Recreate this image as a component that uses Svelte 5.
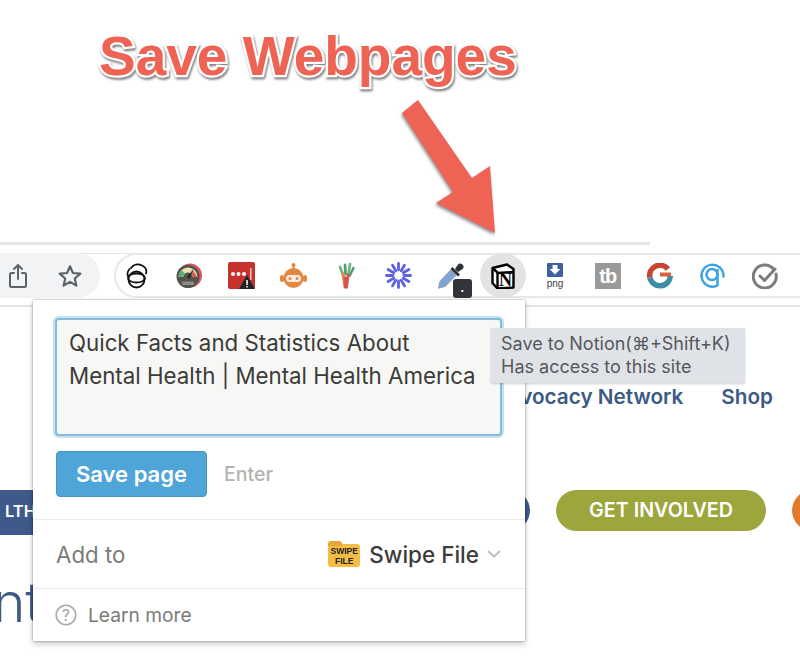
<script>
  const navLinks = ['Advocacy Network', 'Shop'];
</script>

<div class="screen">
  <header class="banner">
    <h1>Save Webpages</h1>
    <div class="rule"></div>
  </header>

  <div class="toolbar">
    <div class="omni-end">
      <svg class="tool" width="24" height="26" viewBox="0 0 24 26" fill="none" stroke="#5f6368" stroke-width="2" stroke-linecap="round" stroke-linejoin="round">
        <path d="M8 10H5.500a1.500 1.500 0 0 0-1.500 1.500v11A1.500 1.500 0 0 0 5.500 24h13a1.500 1.500 0 0 0 1.500-1.500v-11a1.500 1.500 0 0 0-1.500-1.500H16" />
        <path d="M12 16V2M8 6l4-4 4 4" />
      </svg>
      <svg class="tool" width="26" height="26" viewBox="0 0 24 24" fill="none" stroke="#5f6368" stroke-width="2" stroke-linejoin="round">
        <path d="M12 3l2.700 6.200 6.800.6-5.100 4.500 1.500 6.600L12 17.400l-5.900 3.500 1.500-6.600-5.100-4.500 6.800-.6z" />
      </svg>
    </div>

    <div class="extensions">
      <div class="ext">
        <svg width="22" height="26" viewBox="0 0 22 26" fill="none" stroke="#111" stroke-width="1.800">
          <path d="M5 5C7.500 1.500 12 .5 16 2.500c3.500 1.800 5 5 4 8" stroke-linecap="round" />
          <path d="M3.500 6C1.500 8.500 1 11 2 13" stroke-linecap="round" />
          <ellipse cx="10.500" cy="15" rx="8.500" ry="4.500" />
          <circle cx="10.500" cy="16.500" r="8" />
        </svg>
      </div>
      <div class="ext">
        <svg width="26" height="26" viewBox="0 0 26 26">
          <circle cx="14" cy="12.500" r="12" fill="#d9545c" />
          <circle cx="12" cy="13.500" r="11.500" fill="#55534f" />
          <path d="M2.500 14a9.500 9.500 0 0 1 19 0h-5a4.500 4.500 0 0 0-9 0z" fill="#ece2b8" />
          <path d="M2.500 14a9.500 9.500 0 0 1 3-7l3.500 3.500A4.500 4.500 0 0 0 7.500 14z" fill="#5aaf76" />
          <path d="M16 6l5.500 8h-5l-1.500-3.500z" fill="#dc5f58" />
          <path d="M17.500 6.500l-6.500 7.500 2.500 1.500z" fill="#222" />
          <rect x="6" y="18.500" width="12" height="3.500" rx="1" fill="#8a8a86" />
        </svg>
      </div>
      <div class="ext">
        <svg width="27" height="27" viewBox="0 0 27 27">
          <rect width="27" height="27" rx="2" fill="#c8322e" />
          <circle cx="5" cy="12" r="2" fill="#fff" />
          <circle cx="10.500" cy="12" r="2" fill="#fff" />
          <circle cx="16" cy="12" r="2" fill="#fff" />
          <rect x="22" y="6" width="1.500" height="12" fill="#f3c6c0" />
          <path d="M19 13l8 14H11z" fill="#1f2426" />
          <rect x="18.300" y="18" width="1.500" height="5" fill="#fff" />
          <rect x="18.300" y="24" width="1.500" height="1.500" fill="#fff" />
        </svg>
      </div>
      <div class="ext">
        <svg width="27" height="25" viewBox="0 0 27 25">
          <circle cx="13.500" cy="2" r="2" fill="#e5873f" />
          <rect x="12.500" y="2" width="2" height="5" fill="#e5873f" />
          <rect x="0" y="12" width="4" height="7" rx="2" fill="#e5873f" />
          <rect x="23" y="12" width="4" height="7" rx="2" fill="#e5873f" />
          <circle cx="13.500" cy="15" r="10" fill="#e5873f" />
          <rect x="6" y="12" width="15" height="7" rx="3.500" fill="#fbeee2" />
          <circle cx="10" cy="15.500" r="1.500" fill="#e5873f" />
          <circle cx="17" cy="15.500" r="1.500" fill="#e5873f" />
        </svg>
      </div>
      <div class="ext">
        <svg width="18" height="26" viewBox="0 0 18 26" fill="none" stroke-linecap="round">
          <path d="M3 4l3 8" stroke="#6dba7a" stroke-width="2.800" />
          <path d="M8 2l.5 9" stroke="#4f9d7a" stroke-width="2.800" />
          <path d="M13 1l-1.500 10" stroke="#6dba7a" stroke-width="2.800" />
          <path d="M16.500 5l-4 8" stroke="#4f9d7a" stroke-width="2.500" />
          <path d="M6 11l2 13" stroke="#e08a4a" stroke-width="3" />
          <path d="M11 12l-1.500 12" stroke="#d9534f" stroke-width="3" />
          <path d="M8 15l.5 9" stroke="#d9534f" stroke-width="3" />
        </svg>
      </div>
      <div class="ext">
        <svg width="27" height="27" viewBox="-13.500 -13.500 27 27" stroke="#5b60e6" stroke-width="2.800" stroke-linecap="round">
          {#each Array(12) as _, i}
            <line x1="0" y1="-5.500" x2="0" y2="-12" transform="rotate({i * 30})" />
          {/each}
        </svg>
      </div>
      <div class="ext">
        <svg width="26" height="26" viewBox="0 0 26 26">
          <path d="M13 7L2 18.500l-1.500 6.500 6.500-1.500L18 12z" fill="#7aa6dc" stroke="#9aa5b3" stroke-width="1.200" />
          <path d="M12.500 6l7.500 7.500 2-2L14.500 4z" fill="#2c3135" />
          <path d="M17 6l3-4.500a2.800 2.800 0 0 1 4.500 4.500L20 9z" fill="#2c3135" />
        </svg>
        <span class="ext-badge">.</span>
      </div>
      <div class="ext active">
        <svg width="24" height="26" viewBox="0 0 24 26">
          <path d="M1.500 5L16 1.500l6.500 4.500v18.500l-16 1-5-5.500z" fill="#fff" stroke="#000" stroke-width="2.400" stroke-linejoin="round" />
          <path d="M2 5.500l5 4.500 15-1" fill="none" stroke="#000" stroke-width="2.400" />
          <path d="M6.500 10v15" stroke="#000" stroke-width="2.400" />
          <text x="14.500" y="22.500" text-anchor="middle" class="notion-n">N</text>
        </svg>
      </div>
      <div class="ext">
        <svg width="18" height="26" viewBox="0 0 18 26">
          <rect x="1" y="0" width="16" height="14" rx="1" fill="#3f5f9f" />
          <path d="M6.500 2h5v4h3L9 11.500 3.500 6h3z" fill="#fff" />
          <text x="9" y="24" text-anchor="middle" class="png-label">png</text>
        </svg>
      </div>
      <div class="ext">
        <div class="tb-icon">tb</div>
      </div>
      <div class="ext">
        <svg width="26" height="26" viewBox="0 0 26 26" fill="none" stroke-width="5.500">
          <path d="M21 6A10.300 10.300 0 0 0 2.900 14.500" stroke="#c8452f" />
          <path d="M23.300 13A10.300 10.300 0 0 1 2.900 14.500" stroke="#3f8da3" />
          <path d="M13 11.500h11" stroke="#d8603f" stroke-width="4" />
        </svg>
      </div>
      <div class="ext">
        <svg width="25" height="25" viewBox="0 0 25 25" fill="none" stroke="#3ea3e0" stroke-width="2.500">
          <path d="M17.500 22.500A11 11 0 1 1 23.500 12.500v1" stroke-linecap="round" />
          <circle cx="12" cy="11.500" r="5.500" />
          <path d="M17.500 6v16" />
        </svg>
      </div>
      <div class="ext">
        <svg width="26" height="26" viewBox="0 0 26 26" fill="none" stroke="#7d7d7d" stroke-width="3" stroke-linecap="round" stroke-linejoin="round">
          <path d="M21.500 6A11.500 11.500 0 1 0 24 11" />
          <path d="M8 13l4.500 4.500L23 6" />
        </svg>
      </div>
    </div>
  </div>

  <main class="page">
    <nav class="site-nav">
      {#each navLinks as link}
        <span>{link}</span>
      {/each}
    </nav>
    <div class="site-actions">
      <span class="action-tag">LTH</span>
      <span class="action-pill blue"></span>
      <span class="action-pill green">GET INVOLVED</span>
      <span class="action-pill orange"></span>
    </div>
    <h2>nt</h2>
  </main>

  <svg class="arrow" width="100" height="140" viewBox="400 98 100 140">
    <polygon points="402,113 418,100 472,178 490,166 495,233 436,203 453,192" />
  </svg>

  <section class="popup">
    <div class="title-box">Quick Facts and Statistics About Mental Health | Mental Health America</div>
    <div class="save-row">
      <button>Save page</button>
      <span class="hint">Enter</span>
    </div>
    <div class="add-row">
      <span class="add-label">Add to</span>
      <div class="target">
        <div class="folder"><span>SWIPE<br />FILE</span></div>
        <span class="target-name">Swipe File</span>
        <svg width="14" height="8" viewBox="0 0 14 8" fill="none" stroke="#bcbcbc" stroke-width="1.800">
          <path d="M1 1l6 5.500L13 1" />
        </svg>
      </div>
    </div>
    <div class="learn-row">
      <svg width="22" height="22" viewBox="0 0 22 22" fill="none">
        <circle cx="11" cy="11" r="9.800" stroke="#a9a9a9" stroke-width="1.600" />
        <text x="11" y="16.500" text-anchor="middle" class="help-mark">?</text>
      </svg>
      <span>Learn more</span>
    </div>
  </section>

  <div class="tooltip">Save to Notion(⌘+Shift+K)<br />Has access to this site</div>
</div>

<style>
  :global(body) {
    margin: 0;
    background: #fff;
  }

  .screen {
    position: relative;
    width: 800px;
    height: 666px;
    overflow: hidden;
    background: #fff;
    font-family: Inter, "Liberation Sans", sans-serif;
  }

  .banner {
    height: 245px;
    box-sizing: border-box;
    padding-top: 23px;
    display: flex;
    flex-direction: column;
  }

  h1 {
    margin: 0 0 0 99px;
    font-family: "Liberation Sans", Arial, sans-serif;
    font-size: 55px;
    line-height: 66px;
    font-weight: 700;
    white-space: nowrap;
    color: #ee6354;
    -webkit-text-stroke: 4.500px #fff;
    paint-order: stroke fill;
    filter: drop-shadow(1px 2px 1px rgba(70, 70, 70, 0.7));
  }

  .rule {
    width: 650px;
    height: 3px;
    margin-top: auto;
    background: #e6e6e6;
  }

  .toolbar {
    height: 54px;
    box-sizing: border-box;
    display: flex;
    align-items: flex-start;
    gap: 14px;
    margin-top: 8px;
    border-top: 1px solid #e4e4e4;
    border-bottom: 2px solid #e4e4e4;
  }

  .omni-end {
    width: 100px;
    height: 45px;
    margin-top: -1px;
    flex: none;
    box-sizing: border-box;
    display: flex;
    align-items: center;
    gap: 27px;
    padding-left: 6px;
    background: #f1f3f4;
    border-radius: 0 23px 23px 0;
  }

  .tool {
    flex: none;
  }

  .extensions {
    flex: none;
    width: 720px;
    height: 45px;
    margin-top: -1px;
    box-sizing: border-box;
    display: flex;
    gap: 6.300px;
    border: 2px solid #e8e8e8;
    border-right: none;
    border-radius: 23px 0 0 23px;
  }

  .ext {
    position: relative;
    flex: none;
    width: 46px;
    height: 41px;
    display: flex;
    align-items: center;
    justify-content: center;
    margin-left: -2px;
    margin-right: 2px;
  }

  .ext.active::before {
    content: "";
    position: absolute;
    left: 0;
    top: -2px;
    width: 46px;
    height: 45px;
    border-radius: 50%;
    background: #e3e3e3;
  }

  .ext.active svg {
    position: relative;
  }

  .ext-badge {
    position: absolute;
    left: 25px;
    top: 24px;
    width: 19px;
    height: 19px;
    border-radius: 3px;
    background: #33343a;
    color: #fff;
    font-size: 12px;
    font-weight: 700;
    line-height: 17px;
    text-align: center;
    z-index: 2;
  }

  .notion-n {
    font-family: "Liberation Serif", serif;
    font-size: 18px;
    font-weight: 700;
    fill: #000;
  }

  .png-label {
    font-family: "Liberation Sans", sans-serif;
    font-size: 10px;
    fill: #444;
  }

  .tb-icon {
    width: 26px;
    height: 26px;
    background: #999;
    color: #fff;
    font-family: "Liberation Sans", sans-serif;
    font-size: 20px;
    font-weight: 700;
    line-height: 26px;
    letter-spacing: -1px;
    text-align: center;
  }

  .page {
    color: #3d5a85;
  }

  .site-nav {
    display: flex;
    justify-content: flex-end;
    gap: 38px;
    padding: 77px 27px 0 0;
    font-size: 20.700px;
    line-height: 26px;
    font-weight: 600;
    white-space: nowrap;
  }

  .site-actions {
    display: flex;
    align-items: flex-start;
    margin-top: 80px;
    height: 45px;
    font-weight: 600;
    font-size: 19.700px;
    white-space: nowrap;
  }

  .action-tag {
    flex: none;
    width: 48px;
    height: 45px;
    box-sizing: border-box;
    padding-left: 5px;
    font-size: 16.500px;
    line-height: 43px;
    color: #fff;
    background: #3d5a8a;
  }

  .action-pill {
    flex: none;
    height: 41px;
    line-height: 40px;
    border-radius: 21px;
    text-align: center;
  }

  .blue {
    width: 100px;
    margin-left: 382px;
    background: #3d5a8a;
  }

  .green {
    width: 210px;
    margin-left: 26px;
    background: #9ca63c;
    color: #fff;
  }

  .orange {
    width: 60px;
    margin-left: 26px;
    background: #e07b2c;
  }

  h2 {
    margin: 37px 0 0 -7px;
    font-size: 55px;
    line-height: 60px;
    font-weight: 300;
  }

  .arrow {
    position: absolute;
    left: 400px;
    top: 98px;
    filter: drop-shadow(-1px 2px 1.500px rgba(60, 60, 60, 0.55));
  }

  .arrow polygon {
    fill: #ee6354;
  }

  .popup {
    position: absolute;
    left: 33px;
    top: 300px;
    width: 492px;
    height: 341px;
    box-sizing: border-box;
    padding-top: 18px;
    background: #fff;
    box-shadow: 0 0 2px rgba(0, 0, 0, 0.4), 0 3px 6px rgba(0, 0, 0, 0.22);
    display: flex;
    flex-direction: column;
    color: #37352f;
  }

  .title-box {
    width: 447px;
    height: 118px;
    margin-left: 22px;
    box-sizing: border-box;
    padding: 6px 24px 6px 12px;
    background: #f7f7f5;
    border: 2px solid #84bcdc;
    border-radius: 4px;
    box-shadow: 0 0 0 2px #c5e0f0;
    font-size: 22.300px;
    line-height: 33px;
    color: #3b3b38;
  }

  .save-row {
    display: flex;
    align-items: center;
    gap: 17px;
    margin: 15px 0 22px 23px;
  }

  button {
    width: 151px;
    height: 46px;
    padding: 0;
    border: 1px solid #4496c8;
    border-radius: 4px;
    background: #50a5d8;
    color: #fff;
    font-family: inherit;
    font-size: 22px;
    font-weight: 600;
  }

  .hint {
    font-size: 19.500px;
    font-weight: 500;
    color: #b3b3b1;
  }

  .add-row {
    height: 69px;
    box-sizing: border-box;
    display: flex;
    align-items: center;
    justify-content: space-between;
    padding: 0 24px 0 23px;
    border-top: 1px solid #ececec;
  }

  .add-label {
    font-size: 22.300px;
    color: #7b7b78;
  }

  .target {
    display: flex;
    align-items: center;
    gap: 9px;
  }

  .target-name {
    font-size: 22.500px;
    font-weight: 500;
    color: #3d3c3a;
  }

  .target svg {
    margin-left: -1px;
  }

  .folder {
    position: relative;
    width: 32px;
    height: 23px;
    margin-top: 3px;
    background: #f3bd45;
    border-radius: 3px;
    display: flex;
    align-items: center;
    justify-content: center;
    font-family: "Liberation Sans", sans-serif;
    font-size: 8.500px;
    line-height: 10px;
    font-weight: 700;
    text-align: center;
    color: #222;
  }

  .folder::before {
    content: "";
    position: absolute;
    left: 0;
    top: -3px;
    width: 14px;
    height: 5px;
    background: #e6a83a;
    border-radius: 3px 3px 0 0;
  }

  .folder span {
    position: relative;
  }

  .learn-row {
    flex: 1;
    display: flex;
    align-items: center;
    gap: 11px;
    padding: 0 0 0 22px;
    border-top: 1px solid #ececec;
    font-size: 19.200px;
    color: #7b7b78;
  }

  .help-mark {
    font-family: Inter, sans-serif;
    font-size: 15.500px;
    fill: #a0a0a0;
  }

  .tooltip {
    position: absolute;
    left: 491px;
    top: 328px;
    width: 254px;
    height: 55px;
    box-sizing: border-box;
    padding: 4px 10px;
    background: #dfe3e7;
    box-shadow: 0 1px 2px rgba(0, 0, 0, 0.2);
    font-size: 18px;
    line-height: 23px;
    color: #56585c;
    white-space: nowrap;
  }
</style>
